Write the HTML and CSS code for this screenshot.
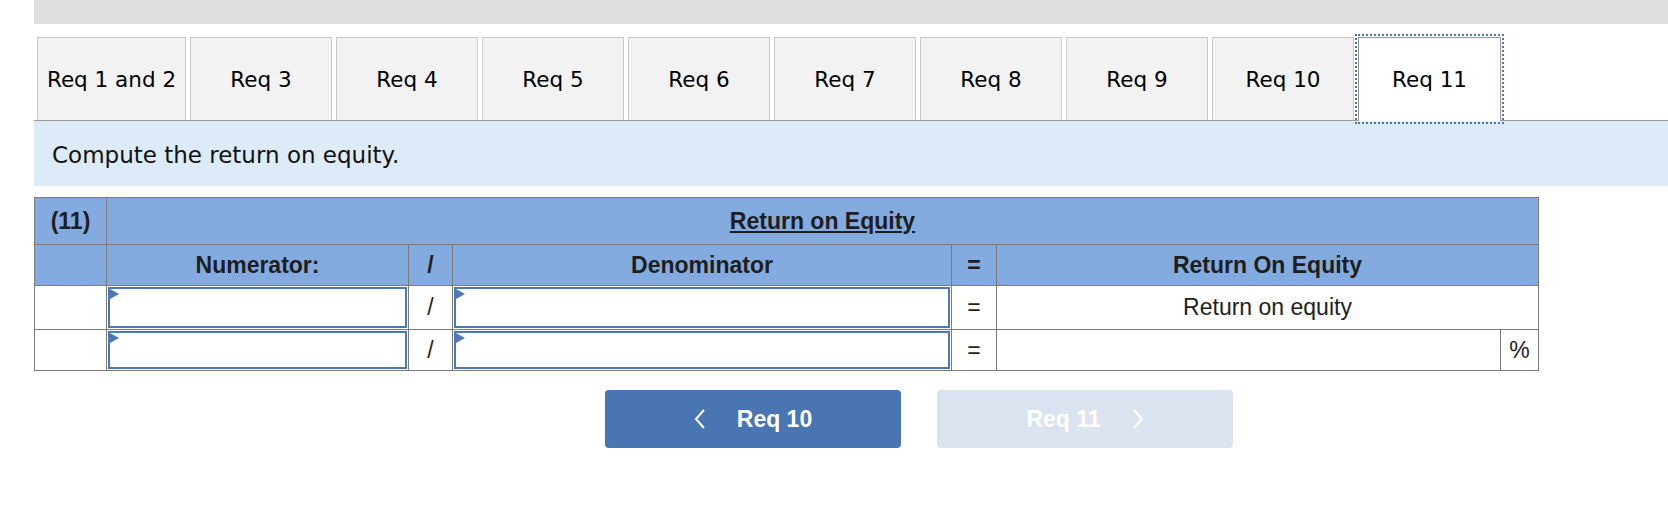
FILE: index.html
```html
<!DOCTYPE html>
<html>
<head>
<meta charset="utf-8">
<link rel="stylesheet" href="styles.css">
</head>
<body>
<div class="page">
  <div class="topbar"></div>
  <div class="tabs">
    <div class="tab tab-wide">Req 1 and 2</div>
    <div class="tab">Req 3</div>
    <div class="tab">Req 4</div>
    <div class="tab">Req 5</div>
    <div class="tab">Req 6</div>
    <div class="tab">Req 7</div>
    <div class="tab">Req 8</div>
    <div class="tab">Req 9</div>
    <div class="tab">Req 10</div>
    <div class="tab active">Req 11</div>
  </div>
  <div class="prompt">Compute the return on equity.</div>
  <table class="roe">
    <colgroup>
      <col class="c-label">
      <col class="c-num">
      <col class="c-op">
      <col class="c-den">
      <col class="c-eq">
      <col class="c-res">
      <col class="c-pct">
    </colgroup>
    <tr class="h1">
      <th>(11)</th>
      <th colspan="6"><span class="title">Return on Equity</span></th>
    </tr>
    <tr class="h2">
      <th></th>
      <th>Numerator:</th>
      <th>/</th>
      <th>Denominator</th>
      <th>=</th>
      <th colspan="2">Return On Equity</th>
    </tr>
    <tr class="r1">
      <td></td>
      <td class="in"><div class="field"></div></td>
      <td>/</td>
      <td class="in"><div class="field"></div></td>
      <td>=</td>
      <td colspan="2">Return on equity</td>
    </tr>
    <tr class="r2">
      <td></td>
      <td class="in"><div class="field"></div></td>
      <td>/</td>
      <td class="in"><div class="field"></div></td>
      <td>=</td>
      <td></td>
      <td>%</td>
    </tr>
  </table>
  <div class="nav">
    <div class="btn prev">
      <svg class="chev" width="12" height="20" viewBox="0 0 12 20"><polyline points="10,1 2,10 10,19" fill="none" stroke="#fff" stroke-width="2"/></svg>
      <span>Req 10</span>
    </div>
    <div class="btn next">
      <span>Req 11</span>
      <svg class="chev" width="12" height="20" viewBox="0 0 12 20"><polyline points="2,1 10,10 2,19" fill="none" stroke="#fff" stroke-width="2"/></svg>
    </div>
  </div>
</div>
</body>
</html>
```

FILE: styles.css
```css
html, body {
  margin: 0;
  padding: 0;
  background: #fff;
}

.page {
  padding-left: 34px;
}

.topbar {
  height: 24px;
  background: #dfdfdf;
}

.tabs {
  display: flex;
  gap: 4px;
  padding: 13px 0 0 3px;
  border-bottom: 1px solid #9a9a9a;
  height: 83px;
}

.tab {
  box-sizing: border-box;
  width: 142px;
  height: 83px;
  background: #f2f2f2;
  border: 1px solid #c9c9c9;
  border-bottom: none;
  display: flex;
  align-items: center;
  justify-content: center;
  font-family: "DejaVu Sans", Verdana, sans-serif;
  font-size: 21.5px;
  color: #000;
  white-space: nowrap;
}

.tab-wide {
  width: 149px;
}

.tab.active {
  width: 143px;
  background: #fff;
  border-color: #999;
  height: 84px;
  margin-bottom: -1px;
  outline: 2px dotted #4a76b4;
  outline-offset: 1px;
  position: relative;
}

.prompt {
  box-sizing: border-box;
  height: 65px;
  background: #ddeaf7;
  display: flex;
  align-items: center;
  padding: 3px 0 0 18px;
  font-family: "DejaVu Sans", Verdana, sans-serif;
  font-size: 23px;
  color: #111;
}

.roe {
  margin-top: 11px;
  border-collapse: collapse;
  table-layout: fixed;
  width: 1504px;
  font-family: "Liberation Sans", Arial, sans-serif;
  font-size: 23px;
  color: #1e1e1e;
}

.c-label { width: 72px; }
.c-num { width: 302px; }
.c-op { width: 44px; }
.c-den { width: 499px; }
.c-eq { width: 45px; }
.c-res { width: 504px; }
.c-pct { width: 38px; }

.roe th,
.roe td {
  border: 1px solid #7b7b7b;
  padding: 0;
  text-align: center;
  vertical-align: middle;
}

.roe th {
  background: #83abdf;
  font-weight: bold;
}

.h1 th { height: 46px; }
.h2 th { height: 40px; }
.r1 td { height: 43px; }
.r2 td { height: 40px; }

.title {
  text-decoration: underline;
  text-decoration-thickness: 2px;
  text-underline-offset: 2px;
}

.roe td.in {
  padding: 0 1px;
}

.field {
  position: relative;
  box-sizing: border-box;
  border: 2px solid #4d78b6;
  background: #fff;
}

.r1 .field { height: 41px; }
.r2 .field { height: 38px; }

.field::before {
  content: "";
  position: absolute;
  left: 0;
  top: 0;
  border-left: 9px solid #4d78b6;
  border-top: 5px solid transparent;
  border-bottom: 5px solid transparent;
}

.nav {
  display: flex;
  gap: 36px;
  margin-top: 19px;
  padding-left: 571px;
}

.btn {
  box-sizing: border-box;
  width: 296px;
  height: 58px;
  border-radius: 4px;
  display: flex;
  align-items: center;
  justify-content: center;
  gap: 31px;
  font-family: "Liberation Sans", Arial, sans-serif;
  font-weight: bold;
  font-size: 23px;
  color: #fff;
}

.btn.prev {
  background: #4a75b3;
}

.btn.next {
  background: #dae3ef;
}

.chev {
  display: block;
}
```
